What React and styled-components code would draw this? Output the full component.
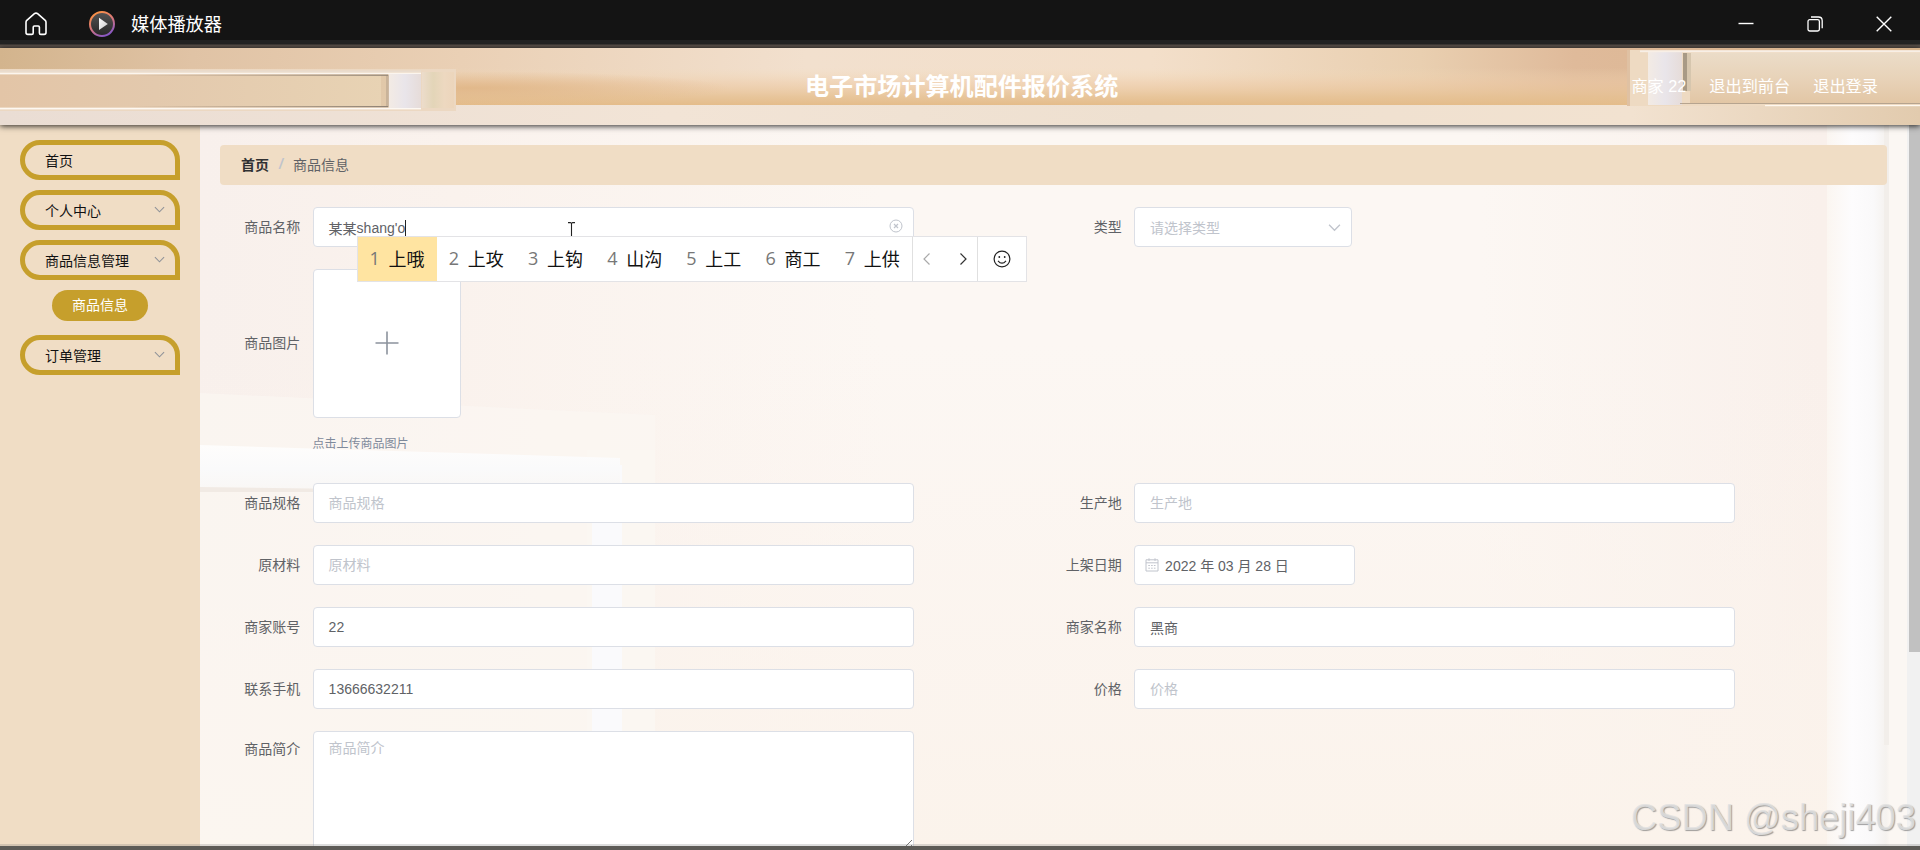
import styled, { createGlobalStyle, css } from "styled-components";

const GlobalStyle = createGlobalStyle`
    * {
        box-sizing: border-box;
    }
    body {
        margin: 0;
        overflow: hidden;
        font-family: "Liberation Sans", "Noto Sans CJK SC", sans-serif;
        font-size: 14px;
        color: #606266;
    }
`

const menus = [
    { name: "首页" },
    { name: "个人中心", arrow: true },
    { name: "商品信息管理", arrow: true, children: ["商品信息"] },
    { name: "订单管理", arrow: true },
];

const candidates = ["上哦", "上攻", "上钩", "山沟", "上工", "商工", "上供"];

function Chevron({ size = 11, color = "#909399", dir = "down" }) {
    const d = {
        down: "M1 3.5 L6 8.5 L11 3.5",
        left: "M8.5 0.5 L3 6 L8.5 11.5",
        right: "M3.5 0.5 L9 6 L3.5 11.5",
    };
    return (
        <svg width={size} height={size} viewBox="0 0 12 12" fill="none" stroke={color} strokeWidth="1.2">
            <path d={d[dir]} />
        </svg>
    )
}

function PlayerBar() {
    return (
        <PlayerBarStyled>
            <HomeIcon width="24" height="24" viewBox="0 0 24 24" fill="none" stroke="#fff" strokeWidth="1.6">
                <path d="M2 10.2 Q2 9.2 2.8 8.4 L10.4 1.7 Q12 0.4 13.6 1.7 L21.2 8.4 Q22 9.2 22 10.2 V20.6 Q22 22.4 20.2 22.4 H16.8 Q15.4 22.4 15.4 21 V15.2 Q15.4 14 14.2 14 H10.4 Q9.2 14 9.2 15.2 V21 Q9.2 22.4 7.8 22.4 H3.8 Q2 22.4 2 20.6 Z" strokeLinejoin="round" />
            </HomeIcon>
            <svg width="26" height="26" viewBox="0 0 26 26">
                <defs>
                    <linearGradient id="ring" x1="0.2" y1="0" x2="0.7" y2="1">
                        <stop offset="0" stopColor="#ff9440" />
                        <stop offset="0.5" stopColor="#d8777c" />
                        <stop offset="1" stopColor="#8456c8" />
                    </linearGradient>
                    <linearGradient id="disc" x1="0" y1="0" x2="0" y2="1">
                        <stop offset="0" stopColor="#555" />
                        <stop offset="1" stopColor="#262626" />
                    </linearGradient>
                    <linearGradient id="tri" x1="0" y1="0" x2="1" y2="1">
                        <stop offset="0" stopColor="#fff" />
                        <stop offset="1" stopColor="#c8c8c8" />
                    </linearGradient>
                </defs>
                <circle cx="13" cy="13" r="12" fill="url(#disc)" stroke="url(#ring)" strokeWidth="2" />
                <path d="M10 6.8 L18.8 12.9 L10 19 Z" fill="url(#tri)" />
            </svg>
            <PlayerName>媒体播放器</PlayerName>
            <WindowButtons>
                <svg width="16" height="16" viewBox="0 0 16 16" stroke="#fff" strokeWidth="1.4">
                    <path d="M0.5 7.5 H15.5" />
                </svg>
                <svg width="16" height="16" viewBox="0 0 16 16" fill="none" stroke="#fff" strokeWidth="1.3">
                    <rect x="1" y="3.6" width="11.4" height="11.4" rx="1.8" />
                    <path d="M4 1 H11.4 Q15.2 1 15.2 4.8 V12.2" />
                </svg>
                <svg width="16" height="16" viewBox="0 0 16 16" stroke="#fff" strokeWidth="1.4">
                    <path d="M0.7 0.7 L15.3 15.3 M15.3 0.7 L0.7 15.3" />
                </svg>
            </WindowButtons>
        </PlayerBarStyled>
    )
}

//顶部背景图
function HeaderArt() {
    return (
        <ArtStyled width="1920" height="77" viewBox="0 0 1920 77" preserveAspectRatio="none">
            <defs>
                <linearGradient id="wall">
                    <stop offset="0" stopColor="#d3b48d" />
                    <stop offset="0.1" stopColor="#e0c3a5" />
                    <stop offset="0.24" stopColor="#ead0b5" />
                    <stop offset="0.42" stopColor="#f2e0ce" />
                    <stop offset="0.6" stopColor="#f3dfca" />
                    <stop offset="0.74" stopColor="#e9cfb0" />
                    <stop offset="0.82" stopColor="#dfba9a" />
                    <stop offset="1" stopColor="#d9b48c" />
                </linearGradient>
                <linearGradient id="glow" x2="0" y2="1">
                    <stop offset="0.35" stopColor="#f3dcb9" stopOpacity="0" />
                    <stop offset="0.6" stopColor="#eecba6" stopOpacity="0.5" />
                    <stop offset="0.85" stopColor="#e6c193" stopOpacity="0.85" />
                    <stop offset="1" stopColor="#e4bc8a" />
                </linearGradient>
                <radialGradient id="spot">
                    <stop offset="0" stopColor="#dfb484" stopOpacity="0.8" />
                    <stop offset="1" stopColor="#dfb484" stopOpacity="0" />
                </radialGradient>
                <linearGradient id="table">
                    <stop offset="0" stopColor="#eaddd4" />
                    <stop offset="0.35" stopColor="#f2e4d6" />
                    <stop offset="0.6" stopColor="#eee0d0" />
                    <stop offset="0.85" stopColor="#f2e2d0" />
                    <stop offset="1" stopColor="#e2cbae" />
                </linearGradient>
                <linearGradient id="shelf">
                    <stop offset="0" stopColor="#e3c5a7" />
                    <stop offset="0.4" stopColor="#e3c9ad" />
                    <stop offset="1" stopColor="#e8d3b4" />
                </linearGradient>
                <linearGradient id="shelfRight" x2="0" y2="1">
                    <stop offset="0" stopColor="#ebdcc8" />
                    <stop offset="0.5" stopColor="#e8d3b9" />
                    <stop offset="1" stopColor="#e2c6a5" />
                </linearGradient>
                <linearGradient id="lineDark" gradientUnits="userSpaceOnUse" x1="100" y1="0" x2="388" y2="0">
                    <stop offset="0.1" stopColor="#8f7c6a" stopOpacity="0" />
                    <stop offset="1" stopColor="#8f8274" />
                </linearGradient>
                <linearGradient id="post">
                    <stop offset="0" stopColor="#f3ebe4" />
                    <stop offset="0.5" stopColor="#e9e5ea" />
                    <stop offset="1" stopColor="#e6dcd9" />
                </linearGradient>
                <linearGradient id="edge">
                    <stop offset="0" stopColor="#ecdccb" />
                    <stop offset="0.35" stopColor="#e3d5b8" />
                    <stop offset="0.7" stopColor="#edd8c0" />
                    <stop offset="1" stopColor="#ecd5bb" />
                </linearGradient>
            </defs>
            <rect width="1920" height="57" fill="url(#wall)" />
            <rect width="1920" height="57" fill="url(#glow)" />
            <ellipse cx="470" cy="40" rx="260" ry="17" fill="url(#spot)" />
            <rect y="57" width="1920" height="20" fill="url(#table)" />
            <rect y="21" width="456" height="42" fill="#ecd8c2" />
            <rect y="27" width="388" height="32" fill="url(#shelf)" />
            <rect x="381" y="27" width="7" height="32" fill="#d3b596" opacity="0.35" />
            <rect x="386" y="27" width="3" height="32" fill="#b9a58f" opacity="0.6" />
            <rect x="389" y="26" width="32" height="34" fill="url(#post)" />
            <rect x="422" y="24" width="32" height="36" fill="url(#edge)" />
            <rect y="22.6" width="421" height="1" fill="#e6e0dc" opacity="0.8" />
            <rect y="24.6" width="421" height="1.4" fill="#fbf5ee" />
            <rect x="100" y="26.6" width="288" height="1.2" fill="url(#lineDark)" />
            <rect x="100" y="58" width="288" height="1.2" fill="url(#lineDark)" />
            <rect y="60" width="421" height="1.4" fill="#fdf8f2" />
            <rect x="1627" y="2" width="293" height="56" fill="#eedac2" />
            <rect x="1627" y="2" width="3" height="56" fill="#d9b795" opacity="0.7" />
            <rect x="1648" y="4" width="34" height="53" fill="url(#post)" />
            <rect x="1690" y="5" width="230" height="50" fill="url(#shelfRight)" />
            <rect x="1683" y="5" width="4" height="38" fill="#a89a86" />
            <rect x="1687" y="5" width="4" height="38" fill="#d6c6ae" />
            <rect x="1640" y="2.4" width="280" height="1.8" fill="#f8efe6" />
            <rect x="1680" y="55" width="240" height="1" fill="#a89682" opacity="0.8" />
            <rect x="1765" y="57" width="155" height="1.2" fill="#fff8ef" />
        </ArtStyled>
    )
}

//内容区背景图
function ContentArt() {
    return (
        <ArtStyled width="1707" height="725" viewBox="0 0 1707 725" preserveAspectRatio="none">
            <defs>
                <linearGradient id="base">
                    <stop offset="0" stopColor="#f8f0ec" />
                    <stop offset="0.15" stopColor="#faf2ed" />
                    <stop offset="0.4" stopColor="#fcf7f3" />
                    <stop offset="0.75" stopColor="#fcf7f3" />
                    <stop offset="0.95" stopColor="#f9f0eb" />
                </linearGradient>
                <linearGradient id="low" x2="0" y2="1">
                    <stop offset="0.3" stopColor="#fbf3ed" stopOpacity="0" />
                    <stop offset="1" stopColor="#fbf3eb" />
                </linearGradient>
                <linearGradient id="beam" x2="0" y2="1">
                    <stop offset="0" stopColor="#fefdfc" />
                    <stop offset="0.45" stopColor="#fafafb" />
                    <stop offset="1" stopColor="#f9f6f3" />
                </linearGradient>
                <linearGradient id="pole">
                    <stop offset="0" stopColor="#fbf6f1" />
                    <stop offset="0.4" stopColor="#fdfcfd" />
                    <stop offset="0.75" stopColor="#faf9fa" />
                    <stop offset="0.95" stopColor="#f5f2ef" />
                    <stop offset="1" stopColor="#faf6f2" />
                </linearGradient>
            </defs>
            <rect width="1707" height="725" fill="url(#base)" />
            <rect width="1707" height="725" fill="url(#low)" />
            <path d="M0 268 L455 290 V725 H0 Z" fill="#fbf6f2" opacity="0.7" />
            <rect x="387" y="325" width="68" height="400" fill="#fbf7f2" />
            <rect x="392" y="340" width="30" height="385" fill="#fafafc" />
            <path d="M0 320 L420 333 V372 L0 366 Z" fill="url(#beam)" />
            <path d="M0 362 L150 364 V367 L0 367 Z" fill="#f1eae4" />
            <rect x="1627" width="62" height="725" fill="url(#pole)" />
            <rect x="1684" width="5" height="620" fill="#f2eeea" />
            <rect x="1689" width="18" height="725" fill="#fbf7f3" />
        </ArtStyled>
    )
}

function Ime() {
    return (
        <ImeStyled>
            {candidates.map((c, i) => (
                <Candidate key={i} $active={i === 0}>
                    <span>{i + 1}</span>{c}
                </Candidate>
            ))}
            <ImePager>
                <Chevron dir="left" size={12} color="#aaa" />
                <Chevron dir="right" size={12} color="#333" />
            </ImePager>
            <ImeFace>
                <svg width="18" height="18" viewBox="0 0 18 18" fill="none" stroke="#222" strokeWidth="1.2">
                    <circle cx="9" cy="9" r="7.9" />
                    <circle cx="6.3" cy="7" r="0.9" fill="#222" stroke="none" />
                    <circle cx="11.7" cy="7" r="0.9" fill="#222" stroke="none" />
                    <path d="M5 10.8 Q9 15.6 13 10.8" />
                </svg>
            </ImeFace>
        </ImeStyled>
    )
}

function Field({ label, value, placeholder }) {
    return (
        <FormItem>
            <Label>{label}</Label>
            <InputBox $raise={!value}>{value || <Placeholder>{placeholder}</Placeholder>}</InputBox>
        </FormItem>
    )
}

export default function App() {
    return (
        <Page>
            <GlobalStyle />
            <PlayerBar />
            <Header>
                <HeaderArt />
                <SystemTitle>电子市场计算机配件报价系统</SystemTitle>
                <UserLinks>
                    <span>商家 22</span>
                    <span>退出到前台</span>
                    <span>退出登录</span>
                </UserLinks>
            </Header>
            <Body>
                <Sidebar>
                    {menus.map((m) => (
                        <MenuGroup key={m.name}>
                            <MenuItem>
                                {m.name}
                                {m.arrow && <Chevron />}
                            </MenuItem>
                            {m.children && m.children.map((c) => <SubItem key={c}>{c}</SubItem>)}
                        </MenuGroup>
                    ))}
                </Sidebar>
                <Main>
                    <ContentArt />
                    <Breadcrumb>
                        <b>首页</b>
                        <i>/</i>
                        <span>商品信息</span>
                    </Breadcrumb>
                    <FormGrid>
                        <FormItem>
                            <Label>商品名称</Label>
                            <InputBox>
                                <Typed>某某<Composing>shang'o</Composing><Caret /></Typed>
                                <ClearIcon width="14" height="14" viewBox="0 0 14 14" fill="none" stroke="#c0c4cc" strokeWidth="1">
                                    <circle cx="7" cy="7" r="6" />
                                    <path d="M5 5 L9 9 M9 5 L5 9" strokeWidth="1.2" />
                                </ClearIcon>
                                <MouseCursor width="9" height="17" viewBox="0 0 9 17" fill="none" stroke="#222" strokeWidth="1.1">
                                    <path d="M1 0.6 H3.4 L4.5 1.4 L5.6 0.6 H8 M4.5 1.4 V15.6 M1 16.4 H3.4 L4.5 15.6 L5.6 16.4 H8" />
                                </MouseCursor>
                                <Ime />
                            </InputBox>
                        </FormItem>
                        <FormItem>
                            <Label>类型</Label>
                            <InputBox $width="218px" $between>
                                <Placeholder>请选择类型</Placeholder>
                                <Chevron size={13} color="#c0c4cc" />
                            </InputBox>
                        </FormItem>
                        <FormItem $wide>
                            <Label $height="148px">商品图片</Label>
                            <div>
                                <UploadBox>
                                    <svg width="24" height="24" viewBox="0 0 24 24" stroke="#8c939d" strokeWidth="1.6">
                                        <path d="M0.5 12 H23.5 M12 0.5 V23.5" />
                                    </svg>
                                </UploadBox>
                                <UploadTip>点击上传商品图片</UploadTip>
                            </div>
                        </FormItem>
                        <Field label="商品规格" placeholder="商品规格" />
                        <Field label="生产地" placeholder="生产地" />
                        <Field label="原材料" placeholder="原材料" />
                        <FormItem>
                            <Label>上架日期</Label>
                            <InputBox $width="221px" $icon>
                                <svg width="14" height="14" viewBox="0 0 14 14" fill="none" stroke="#c0c4cc" strokeWidth="1">
                                    <path d="M1 1.8 H13 V13 H1 Z M1 4.8 H13 M4 0.3 V3 M10 0.3 V3" />
                                    <path d="M3.3 7.5 H10.9 M3.3 10.2 H10.9" strokeDasharray="1.6 1.2" />
                                </svg>
                                2022 年 03 月 28 日
                            </InputBox>
                        </FormItem>
                        <Field label="商家账号" value="22" />
                        <Field label="商家名称" value="黑商" />
                        <Field label="联系手机" value="13666632211" />
                        <Field label="价格" placeholder="价格" />
                        <FormItem>
                            <Label $height="36px">商品简介</Label>
                            <TextArea>
                                <Placeholder>商品简介</Placeholder>
                                <svg width="9" height="9" viewBox="0 0 9 9" stroke="#777" strokeWidth="1">
                                    <path d="M0 9 L9 0 M5 9 L9 5" />
                                </svg>
                            </TextArea>
                        </FormItem>
                    </FormGrid>
                </Main>
                <ScrollTrack>
                    <ScrollThumb />
                </ScrollTrack>
            </Body>
            <BottomBar />
            <Watermark>CSDN @sheji403</Watermark>
        </Page>
    )
}

const Page = styled.div`
    position: relative;
    display: flex;
    flex-direction: column;
    width: 1920px;
    height: 850px;
    overflow: hidden;
`

const PlayerBarStyled = styled.div`
    display: flex;
    align-items: center;
    flex: none;
    height: 48px;
    padding: 0 28px 0 24px;
    background: linear-gradient(#141414 40px, #232323 40px, #232323 44px, #5a5049 45px);
    & > svg, & > div {
        margin-bottom: 1px;
    }
`

const HomeIcon = styled.svg`
    margin-right: 41px;
`

const PlayerName = styled.span`
    margin-left: 16px;
    padding-top: 1px;
    font-size: 18.2px;
    line-height: 24px;
    color: #fff;
`

const WindowButtons = styled.div`
    display: flex;
    gap: 53px;
    margin-left: auto;
`

const Header = styled.div`
    position: relative;
    z-index: 2;
    display: flex;
    align-items: center;
    justify-content: flex-end;
    flex: none;
    height: 77px;
    padding-right: 42px;
    color: #fff;
    box-shadow: 0 1px 6px rgba(0, 0, 0, 0.85);
`

const ArtStyled = styled.svg`
    position: absolute;
    top: 0;
    left: 0;
    z-index: -1;
`

const SystemTitle = styled.div`
    flex: 1;
    padding-left: 805px;
    font-size: 24.1px;
    font-weight: bold;
    line-height: 36px;
    white-space: nowrap;
`

const UserLinks = styled.div`
    display: flex;
    gap: 23px;
    padding-bottom: 1px;
    font-size: 16.2px;
    line-height: 24px;
`

const Body = styled.div`
    display: flex;
    flex: 1;
    min-height: 0;
`

const Sidebar = styled.div`
    width: 200px;
    padding: 15px 20px;
    background: #f0ddc5;
`

const MenuGroup = styled.div`
    margin-bottom: 10px;
`

const MenuItem = styled.div`
    display: flex;
    align-items: center;
    justify-content: space-between;
    height: 40px;
    padding: 0 10px 1px 20px;
    border: 5px solid #c69f2c;
    border-radius: 20px 20px 0 20px;
    color: #111;
`

const SubItem = styled.div`
    width: 96px;
    height: 31px;
    margin: 10px auto 14px;
    border-radius: 16px;
    background: #c69f2c;
    color: #fff;
    line-height: 30px;
    text-align: center;
`

const Main = styled.div`
    position: relative;
    z-index: 0;
    flex: 1;
    padding: 20px 20px 0;
    overflow: hidden;
`

const Breadcrumb = styled.div`
    display: flex;
    align-items: center;
    height: 40px;
    padding: 0 0 2px 21px;
    border-radius: 4px;
    background: #f0ddc5;
    b {
        color: #303133;
    }
    i {
        margin: 0 10px;
        font-weight: bold;
        color: #c0c4cc;
    }
`

const FormGrid = styled.div`
    display: grid;
    grid-template-columns: 821.5px 821px;
    row-gap: 22px;
    padding-top: 22px;
`

const FormItem = styled.div`
    display: flex;
    align-items: flex-start;
    ${(props) => props.$wide && css`grid-column: 1 / 3;`}
`

const Label = styled.div`
    width: 92.6px;
    padding-right: 12.4px;
    line-height: ${(props) => props.$height || "40px"};
    text-align: right;
`

const InputBox = styled.div`
    position: relative;
    display: flex;
    align-items: center;
    justify-content: ${(props) => (props.$between ? "space-between" : "flex-start")};
    gap: ${(props) => (props.$icon ? "6px" : "0")};
    width: ${(props) => props.$width || "601px"};
    height: 40px;
    padding: ${(props) => (props.$icon ? "0 10px" : "0 10px 0 15px")};
    padding-bottom: ${(props) => (props.$raise ? "2px" : "0")};
    border: 1px solid #dcdfe6;
    border-radius: 4px;
    background: #fff;
`

const Placeholder = styled.span`
    color: #c0c4cc;
`

const Typed = styled.div`
    display: flex;
    align-items: center;
    padding-top: 2px;
`

const Composing = styled.span`
    border-bottom: 1px dotted #606266;
    line-height: 16px;
`

const Caret = styled.span`
    width: 1px;
    height: 16px;
    background: #222;
`

const ClearIcon = styled.svg`
    margin-left: auto;
    margin-bottom: 3px;
`

const MouseCursor = styled.svg`
    position: absolute;
    left: 253px;
    top: 14px;
`

const ImeStyled = styled.div`
    position: absolute;
    left: 43px;
    top: 28px;
    z-index: 3;
    display: flex;
    height: 46px;
    border: 1px solid #e3e3e6;
    background: #fff;
    color: #111;
    font-size: 18px;
`

const Candidate = styled.div`
    display: flex;
    align-items: center;
    width: 79.2px;
    padding: 0 0 2px 12px;
    background: ${(props) => (props.$active ? "#ffe4a1" : "transparent")};
    white-space: nowrap;
    span {
        width: 19px;
        font-family: "Open Sans", "Noto Sans", sans-serif;
        color: #777;
    }
`

const ImePager = styled.div`
    display: flex;
    align-items: center;
    justify-content: space-between;
    width: 65px;
    padding: 0 8px;
    border-left: 1px solid #e0e0e0;
`

const ImeFace = styled.div`
    display: flex;
    align-items: center;
    justify-content: center;
    width: 49px;
    border-left: 1px solid #e0e0e0;
`

const UploadBox = styled.div`
    display: flex;
    align-items: center;
    justify-content: center;
    width: 148px;
    height: 149px;
    padding-bottom: 2px;
    border: 1px solid #dcdfe6;
    border-radius: 4px;
    background: #fff;
`

const UploadTip = styled.div`
    padding-top: 8px;
    height: 43px;
    font-size: 12px;
    line-height: 36px;
    color: #7f8a9b;
`

const TextArea = styled.div`
    display: flex;
    justify-content: space-between;
    align-items: flex-start;
    width: 601px;
    height: 120px;
    padding: 6px 1px 0 15px;
    border: 1px solid #dcdfe6;
    border-radius: 4px;
    background: #fff;
    line-height: 21px;
    svg {
        margin-top: 102px;
    }
`

const ScrollTrack = styled.div`
    width: 13px;
    padding-left: 2px;
    background: #f1f1f1;
`

const ScrollThumb = styled.div`
    height: 527px;
    background: #c1c1c1;
`

const BottomBar = styled.div`
    position: absolute;
    left: 0;
    bottom: 0;
    z-index: 3;
    width: 100%;
    height: 6px;
    border-top: 2px solid rgba(120, 120, 120, 0.25);
    background: #5d5b57;
    background-clip: padding-box;
`

const Watermark = styled.div`
    position: absolute;
    right: 4px;
    bottom: 12px;
    z-index: 4;
    font-size: 36.3px;
    line-height: 40px;
    color: rgba(226, 226, 226, 0.85);
    text-shadow: 1px 1px 1px rgba(120, 120, 120, 0.7);
`
